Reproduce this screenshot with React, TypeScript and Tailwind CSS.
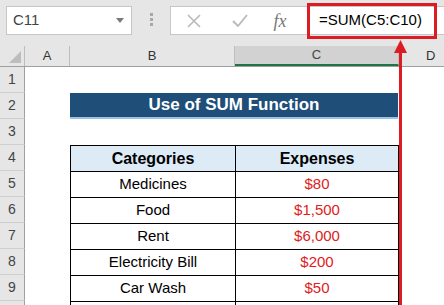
import React from "react";

const rows: { n: number; cat?: string; amt?: string; kind?: "title" | "head" | "data" }[] = [
  { n: 1 },
  { n: 2, kind: "title" },
  { n: 3 },
  { n: 4, kind: "head", cat: "Categories", amt: "Expenses" },
  { n: 5, kind: "data", cat: "Medicines", amt: "$80" },
  { n: 6, kind: "data", cat: "Food", amt: "$1,500" },
  { n: 7, kind: "data", cat: "Rent", amt: "$6,000" },
  { n: 8, kind: "data", cat: "Electricity Bill", amt: "$200" },
  { n: 9, kind: "data", cat: "Car Wash", amt: "$50" },
  { n: 10, kind: "data", cat: "", amt: "" },
];

function CrossIcon() {
  return (
    <svg width="14" height="14" viewBox="0 0 14 14">
      <path d="M1 1 L13 13 M13 1 L1 13" stroke="#b9b9b9" strokeWidth="1.6" fill="none" />
    </svg>
  );
}

function CheckIcon() {
  return (
    <svg width="16" height="13" viewBox="0 0 16 13">
      <path d="M1 7 L6 12 L15 1" stroke="#b9b9b9" strokeWidth="1.8" fill="none" />
    </svg>
  );
}

export default function App() {
  return (
    <div className="relative w-[444px] h-[305px] overflow-hidden bg-white font-['Liberation_Sans',Arial,sans-serif]">
      {/* formula bar */}
      <div className="flex h-[46px] bg-[#e6e6e6] pt-[6px]">
        <div className="ml-[6px] w-[126px] h-[29px] bg-white border border-[#c6c6c6] flex items-center justify-between pl-[6px] pr-[7px]">
          <span className="text-[15px] text-[#444]">C11</span>
          <svg width="8" height="5" viewBox="0 0 8 5">
            <path d="M0 0 L8 0 L4 5 Z" fill="#7a7a7a" />
          </svg>
        </div>
        <div className="w-[38px] flex flex-col items-center gap-[2px] pt-[7px]">
          <span className="w-[3px] h-[3px] bg-[#a8a8a8]" />
          <span className="w-[3px] h-[3px] bg-[#a8a8a8]" />
          <span className="w-[3px] h-[3px] bg-[#a8a8a8]" />
        </div>
        <div className="flex-1 h-[29px] bg-white border border-[#c6c6c6] border-r-0 flex items-center">
          <div className="w-[46px] flex justify-center">
            <CrossIcon />
          </div>
          <div className="w-[46px] flex justify-center">
            <CheckIcon />
          </div>
          <div className="w-[34px] flex justify-center">
            <span className="font-['Liberation_Serif',serif] italic text-[18px] text-[#777] leading-none">fx</span>
          </div>
          <span className="ml-[22px] text-[15px] text-black">=SUM(C5:C10)</span>
        </div>
      </div>

      {/* column headers */}
      <div className="flex h-[21px] bg-[#e6e6e6] border-b border-[#9f9f9f] text-[13px] text-[#333]">
        <div className="w-[25px] border-r border-[#bdbdbd] flex items-end justify-end pr-[3px] pb-[3px]">
          <svg width="12" height="12" viewBox="0 0 12 12">
            <path d="M12 0 L12 12 L0 12 Z" fill="#bdbdbd" />
          </svg>
        </div>
        <div className="w-[45px] border-r border-[#bdbdbd] flex items-center justify-center">A</div>
        <div className="w-[165px] border-r border-[#bdbdbd] flex items-center justify-center">B</div>
        <div className="w-[164px] bg-[#d2d2d2] border-b-2 border-[#217346] border-r border-r-[#bdbdbd] flex items-center justify-center text-[#444]">C</div>
        <div className="flex-1 flex items-center justify-start pl-[27px]">D</div>
      </div>

      {/* sheet rows */}
      {rows.map((r) => (
        <div key={r.n} className="flex h-[26px]">
          <div className="w-[25px] bg-[#e6e6e6] border-r border-[#9f9f9f] border-b border-b-[#cfcfcf] flex items-center justify-center text-[14px] text-[#444]">
            {r.n}
          </div>
          <div className="w-[45px]" />
          {r.kind === "title" ? (
            <div className="w-[328px] h-[26px] flex flex-col">
              <div className="h-[24px] bg-[#1f4e78] flex items-center justify-center text-white font-bold text-[17px]">
                Use of SUM Function
              </div>
              <div className="h-[2px] bg-[#9bc2e6]" />
            </div>
          ) : r.kind ? (
            <>
              <div
                className={`w-[165px] border-l border-t border-black flex items-center justify-center ${
                  r.kind === "head" ? "bg-[#ddebf7] font-bold text-[16px]" : "text-[15px]"
                }`}
              >
                {r.cat}
              </div>
              <div
                className={`w-[164px] border-l border-t border-r border-black flex items-center justify-center ${
                  r.kind === "head" ? "bg-[#ddebf7] font-bold text-[16px]" : "text-[15px] text-[#e0201b]"
                }`}
              >
                {r.amt}
              </div>
            </>
          ) : null}
        </div>
      ))}

      {/* annotation: red box around formula and arrow */}
      <div className="absolute left-[307px] top-[3px] w-[130px] h-[36px] border-[3px] border-[#dc1c22]" />
      <div className="absolute left-[399px] top-[48px] w-[3px] h-[260px] bg-[#dc1c22]" />
      <svg className="absolute left-[394px] top-[40px]" width="13" height="13" viewBox="0 0 13 13">
        <path d="M6.5 0 L13 13 L0 13 Z" fill="#dc1c22" />
      </svg>
    </div>
  );
}
